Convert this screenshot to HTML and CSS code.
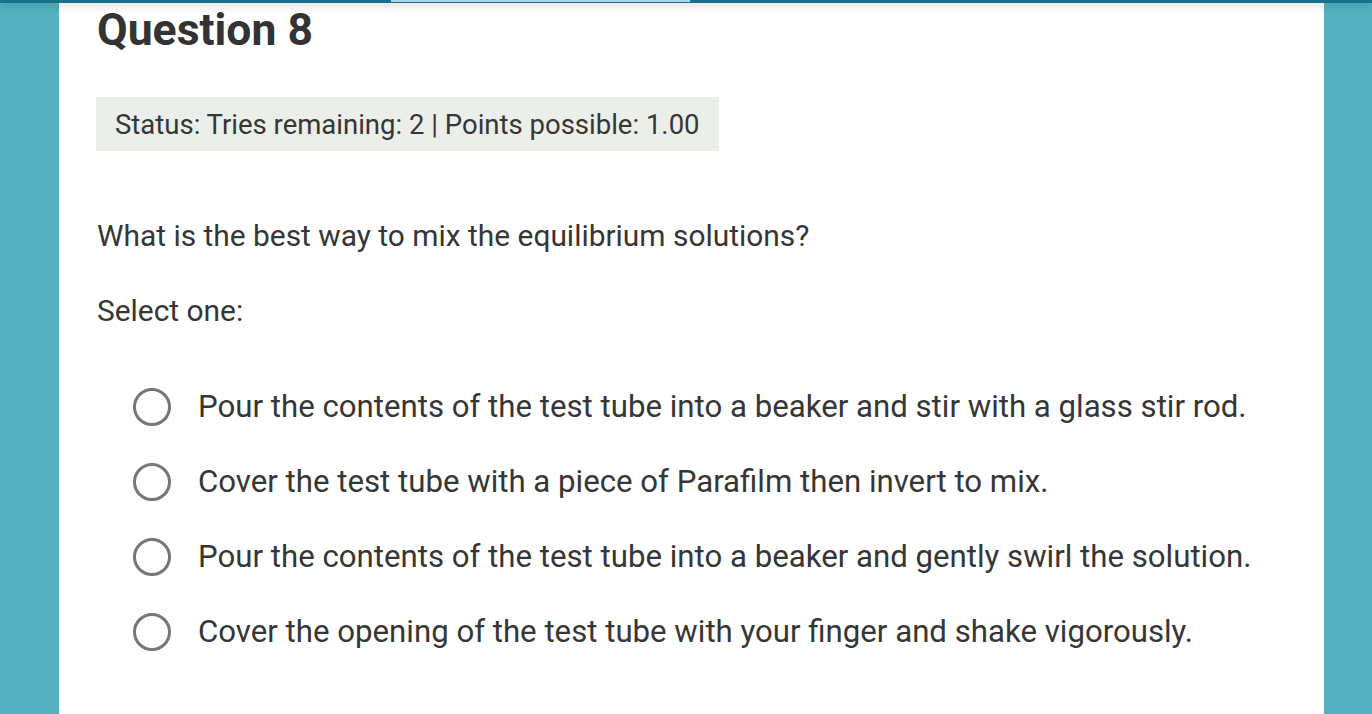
FILE: index.html
```html
<!DOCTYPE html>
<html>
<head>
<meta charset="utf-8">
<link rel="stylesheet" href="styles.css">
</head>
<body>
<div class="topbar"><div class="progress"></div></div>
<main class="card">
  <h1 class="title">Question 8</h1>
  <div class="status">Status: Tries remaining: 2 | Points possible: 1.00</div>
  <p class="question">What is the best way to mix the equilibrium solutions?</p>
  <p class="prompt">Select one:</p>
  <ul class="options">
    <li class="option"><span class="radio"></span><span class="label">Pour the contents of the test tube into a beaker and stir with a glass stir rod.</span></li>
    <li class="option"><span class="radio"></span><span class="label">Cover the test tube with a piece of Parafilm then invert to mix.</span></li>
    <li class="option"><span class="radio"></span><span class="label">Pour the contents of the test tube into a beaker and gently swirl the solution.</span></li>
    <li class="option"><span class="radio"></span><span class="label">Cover the opening of the test tube with your finger and shake vigorously.</span></li>
  </ul>
</main>
</body>
</html>
```
FILE: styles.css
```css
html, body {
  margin: 0;
  padding: 0;
  height: 100%;
  overflow: hidden;
}
body {
  background: #54b1bf;
  font-family: Roboto, "Liberation Sans", sans-serif;
  color: #363636;
}
.topbar {
  position: fixed;
  top: 0;
  left: 0;
  right: 0;
  height: 3px;
  background: #17708a;
  box-shadow: 0 2px 8px rgba(0,0,0,0.28);
  z-index: 2;
}
.progress {
  margin-left: 391px;
  width: 299px;
  height: 2px;
  background: #a9d9e6;
}
.card {
  background: #fff;
  margin: 0 48px 0 59px;
  padding: 1px 0 0 38px;
  min-height: 714px;
  box-sizing: border-box;
}
.title {
  font-size: 44.5px;
  font-weight: 700;
  margin: 3px 0 0 0;
  line-height: 52px;
  color: #333;
}
.status {
  display: inline-block;
  background: #eceee9;
  font-size: 27.5px;
  line-height: 54px;
  padding: 1px 19px 0 19px;
  height: 54px;
  box-sizing: border-box;
  margin-top: 41px;
  margin-left: -1px;
}
.question {
  font-size: 29.9px;
  line-height: 36px;
  margin: 67px 0 0 0;
}
.prompt {
  font-size: 29.9px;
  line-height: 36px;
  margin: 39px 0 0 0;
}
.options {
  list-style: none;
  margin: 40px 0 0 0;
  padding: 0 0 0 36px;
}
.option {
  display: flex;
  align-items: center;
  height: 75px;
}
.radio {
  width: 32px;
  height: 32px;
  border: 3px solid #767676;
  border-radius: 50%;
  flex: none;
  margin-right: 27px;
}
.label {
  font-size: 31.2px;
  line-height: 36px;
}
```
